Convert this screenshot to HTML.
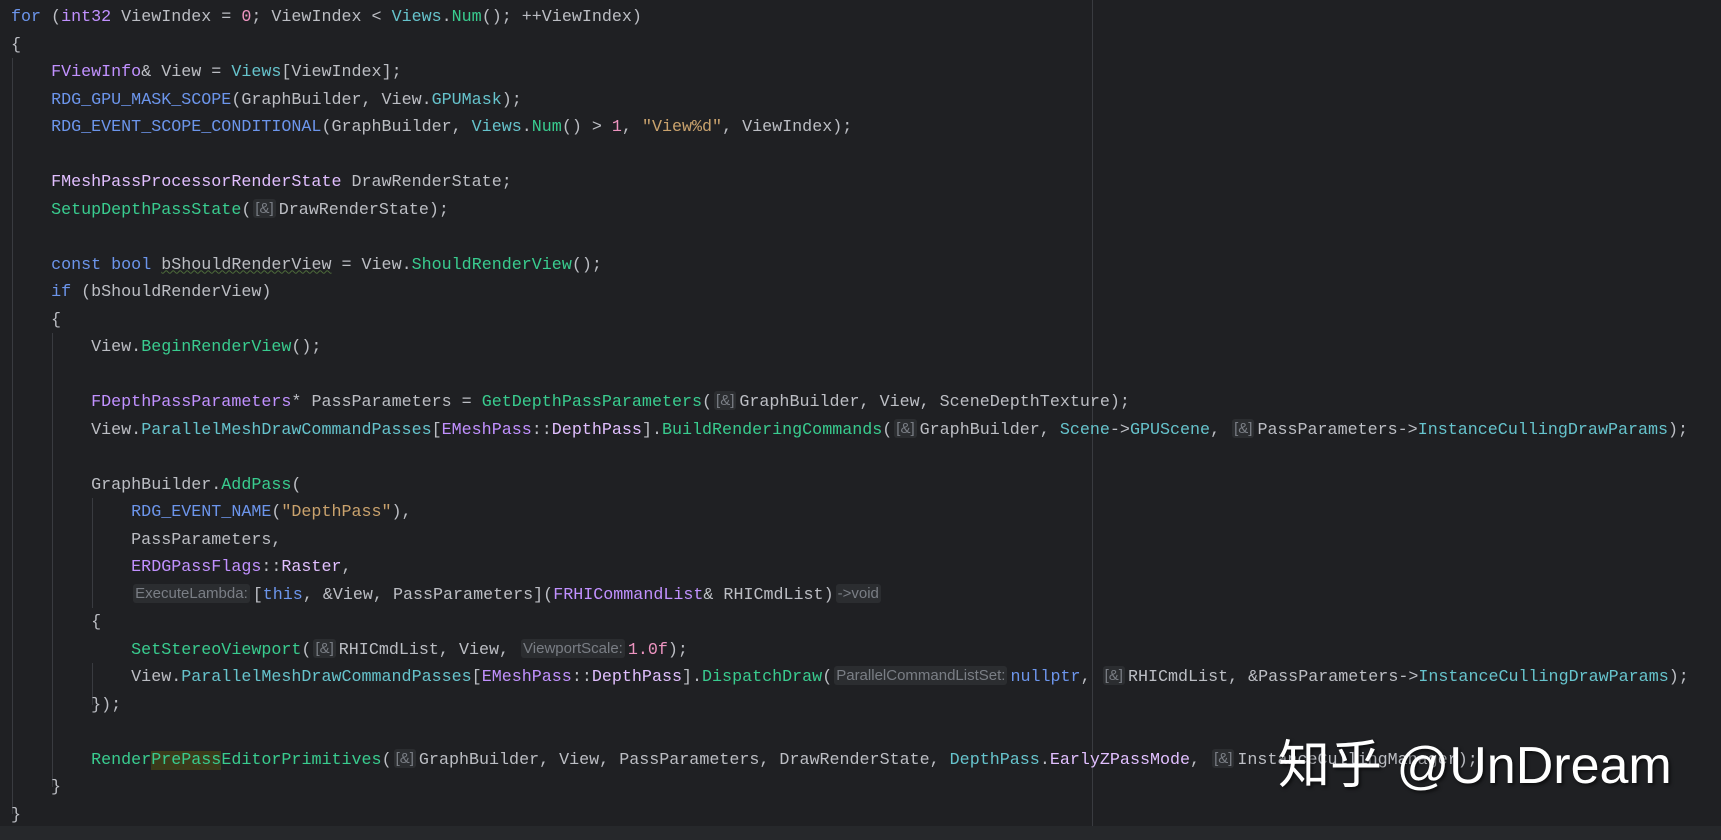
<!DOCTYPE html>
<html><head><meta charset="utf-8"><style>
html,body{margin:0;padding:0;background:#1f2023;width:1721px;height:840px;overflow:hidden}
#bot{position:absolute;left:0;top:826px;width:1721px;height:14px;background:#26282b}
#vl{position:absolute;left:1092px;top:0;width:1px;height:826px;background:#393b40}
.g{position:absolute;width:1px;background:#393b40}
pre{position:absolute;left:11px;top:4px;margin:0;font-family:"Liberation Mono",monospace;font-size:16.7px;line-height:27.5px;color:#bcbec4;white-space:pre}
.k{color:#6c95eb}.t{color:#c191ff}.f{color:#39cc8f}.m{color:#6c95eb}.d{color:#66c3cc}.n{color:#ed94c0}.s{color:#c9a26d}.p{color:#e1bfff}
.h{display:inline-block;font-family:"Liberation Sans",sans-serif;font-size:15px;line-height:19px;background:#2b2d30;color:#7a7e85;border-radius:3px;padding:0 2px;margin:0 3px 0 2px;vertical-align:1px}
.hl{background:#3b3a1a}
.u{text-decoration:underline wavy #4d6b3a;text-decoration-thickness:1px}
#wm{position:absolute;left:1278px;top:737px;font-family:"Liberation Sans","Noto Sans CJK SC",sans-serif;font-size:52px;line-height:58px;color:#fff;text-shadow:2px 2px 3px rgba(0,0,0,.6)}
</style></head><body>
<div id="bot"></div><div id="vl"></div>
<div class="g" style="left:12px;top:58px;height:756px"></div>
<div class="g" style="left:52px;top:333px;height:454px"></div>
<div class="g" style="left:92px;top:498px;height:110px"></div>
<div class="g" style="left:92px;top:663px;height:42px"></div>
<pre><span class="k">for</span> (<span class="t">int32</span> ViewIndex = <span class="n">0</span>; ViewIndex &lt; <span class="d">Views</span>.<span class="f">Num</span>(); ++ViewIndex)
{
    <span class="t">FViewInfo</span>&amp; View = <span class="d">Views</span>[ViewIndex];
    <span class="m">RDG_GPU_MASK_SCOPE</span>(GraphBuilder, View.<span class="d">GPUMask</span>);
    <span class="m">RDG_EVENT_SCOPE_CONDITIONAL</span>(GraphBuilder, <span class="d">Views</span>.<span class="f">Num</span>() &gt; <span class="n">1</span>, <span class="s">"View%d"</span>, ViewIndex);

    <span class="p">FMeshPassProcessorRenderState</span> DrawRenderState;
    <span class="f">SetupDepthPassState</span>(<span class="h">[&amp;]</span>DrawRenderState);

    <span class="k">const bool</span> <span class="u">bShouldRenderView</span> = View.<span class="f">ShouldRenderView</span>();
    <span class="k">if</span> (bShouldRenderView)
    {
        View.<span class="f">BeginRenderView</span>();

        <span class="t">FDepthPassParameters</span>* PassParameters = <span class="f">GetDepthPassParameters</span>(<span class="h">[&amp;]</span>GraphBuilder, View, SceneDepthTexture);
        View.<span class="d">ParallelMeshDrawCommandPasses</span>[<span class="t">EMeshPass</span>::<span class="p">DepthPass</span>].<span class="f">BuildRenderingCommands</span>(<span class="h">[&amp;]</span>GraphBuilder, <span class="d">Scene</span>-&gt;<span class="d">GPUScene</span>, <span class="h">[&amp;]</span>PassParameters-&gt;<span class="d">InstanceCullingDrawParams</span>);

        GraphBuilder.<span class="f">AddPass</span>(
            <span class="m">RDG_EVENT_NAME</span>(<span class="s">"DepthPass"</span>),
            PassParameters,
            <span class="t">ERDGPassFlags</span>::<span class="p">Raster</span>,
            <span class="h">ExecuteLambda:</span>[<span class="k">this</span>, &amp;View, PassParameters](<span class="t">FRHICommandList</span>&amp; RHICmdList)<span class="h">-&gt;void</span>
        {
            <span class="f">SetStereoViewport</span>(<span class="h">[&amp;]</span>RHICmdList, View, <span class="h">ViewportScale:</span><span class="n">1.0f</span>);
            View.<span class="d">ParallelMeshDrawCommandPasses</span>[<span class="t">EMeshPass</span>::<span class="p">DepthPass</span>].<span class="f">DispatchDraw</span>(<span class="h">ParallelCommandListSet:</span><span class="k">nullptr</span>, <span class="h">[&amp;]</span>RHICmdList, &amp;PassParameters-&gt;<span class="d">InstanceCullingDrawParams</span>);
        });

        <span class="f">Render<span class="hl">PrePass</span>EditorPrimitives</span>(<span class="h">[&amp;]</span>GraphBuilder, View, PassParameters, DrawRenderState, <span class="d">DepthPass</span>.<span class="p">EarlyZPassMode</span>, <span class="h">[&amp;]</span>InstanceCullingManager);
    }
}</pre>
<div id="wm">知乎 @UnDream</div>
</body></html>
